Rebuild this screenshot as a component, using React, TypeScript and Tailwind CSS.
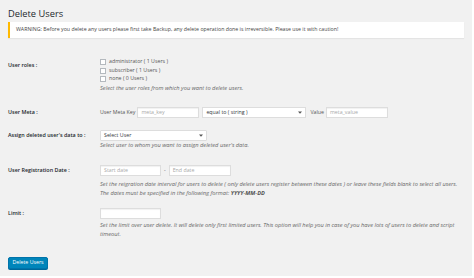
import React from "react";

const Arrow = () => (
  <svg width="4" height="3" viewBox="0 0 4 3" className="shrink-0">
    <path d="M0 0.5 L4 0.5 L2 2.8 Z" fill="#555" />
  </svg>
);

const Box = ({ w, ph }: { w: string; ph?: string }) => (
  <div className={`${w} h-[11px] bg-white border border-[#ddd] shadow-[inset_0_1px_1px_rgba(0,0,0,0.06)] flex items-center px-[3px] text-[#a8a8a8]`}>
    {ph}
  </div>
);

const Label = ({ children, h = "h-[11px]" }: { children: React.ReactNode; h?: string }) => (
  <div className={`w-[92px] shrink-0 ${h} flex items-center font-semibold text-[5.4px] text-[#23282d]`}>{children}</div>
);

const Desc = ({ children }: { children: React.ReactNode }) => (
  <div className="h-[8.5px] leading-[8.5px] italic text-[5.7px] text-[#666] whitespace-nowrap">{children}</div>
);

const Check = ({ label }: { label: string }) => (
  <div className="h-[8.5px] flex items-center gap-[3px]">
    <div className="w-[6px] h-[6px] bg-white border border-[#b4b9be]" />
    <span className="text-[#555]">{label}</span>
  </div>
);

export default function App() {
  return (
    <div className="min-h-screen bg-white font-['Open_Sans',sans-serif] text-[5.25px] text-[#444]">
      <div className="w-[472px] h-[276px] bg-[#f1f1f1] px-[8px] pt-[8px]">
        <h1 className="text-[9.3px] leading-[12px] text-[#23282d]">Delete Users</h1>

        <div className="mt-[2px] h-[16px] bg-white border-l-2 border-[#ffb900] shadow-[0_1px_1px_rgba(0,0,0,0.05)] flex items-center pl-[6px] text-[#444]">
          WARNING: Before you delete any users please first take Backup, any delete operation done is irreversible. Please use it with caution!
        </div>

        {/* User roles */}
        <div className="mt-[20px] flex">
          <Label h="h-[14px]">User roles :</Label>
          <div>
            <Check label="administrator ( 1 Users )" />
            <Check label="subscriber ( 1 Users )" />
            <Check label="none ( 0 Users )" />
            <Desc>Select the user roles from which you want to delete users.</Desc>
          </div>
        </div>

        {/* User meta */}
        <div className="mt-[15px] flex">
          <Label>User Meta :</Label>
          <div className="flex items-center h-[11px] gap-[2px]">
            <span className="text-[#555]">User Meta Key</span>
            <Box w="w-[62px]" ph="meta_key" />
            <div className="w-[104px] ml-[1px] h-[11px] bg-white border border-[#ddd] flex items-center justify-between px-[3px] text-[#32373c]">
              <span>equal to ( string )</span>
              <Arrow />
            </div>
            <span className="text-[#555] ml-[2px]">Value</span>
            <Box w="w-[62px]" ph="meta_value" />
          </div>
        </div>

        {/* Assign */}
        <div className="mt-[12px] flex">
          <Label>Assign deleted user's data to :</Label>
          <div>
            <div className="w-[107px] h-[11px] bg-white border border-[#ddd] rounded-[1px] flex items-center justify-between px-[3px] text-[#32373c]">
              <span>Select User</span>
              <Arrow />
            </div>
            <Desc>Select user to whom you want to assign deleted user's data.</Desc>
          </div>
        </div>

        {/* Registration date */}
        <div className="mt-[15.5px] flex">
          <Label>User Registration Date :</Label>
          <div>
            <div className="flex items-center gap-[2px]">
              <Box w="w-[61px]" ph="Start date" />
              <span className="text-[#555] mx-[1px]">-</span>
              <Box w="w-[62px]" ph="End date" />
            </div>
            <div className="mt-[4px]">
              <Desc>Set the reigration date interval for users to delete ( only delete users register between these dates ) or leave these fields blank to select all users.</Desc>
              <Desc>
                The dates must be specified in the following format: <b className="font-bold text-[#555]">YYYY-MM-DD</b>
              </Desc>
            </div>
          </div>
        </div>

        {/* Limit */}
        <div className="mt-[11px] flex">
          <Label>Limit :</Label>
          <div>
            <Box w="w-[61px]" />
            <div className="mt-[2px]">
              <Desc>Set the limit over user delete. It will delete only first limited users. This option will help you in case of you have lots of users to delete and script</Desc>
              <Desc>timeout.</Desc>
            </div>
          </div>
        </div>

        <button className="mt-[19px] h-[12px] w-[40px] bg-[#0085ba] border border-[#0073aa] rounded-[2px] shadow-[0_1px_0_#006799] text-white text-[5.25px] flex items-center justify-center">
          Delete Users
        </button>
      </div>
    </div>
  );
}
